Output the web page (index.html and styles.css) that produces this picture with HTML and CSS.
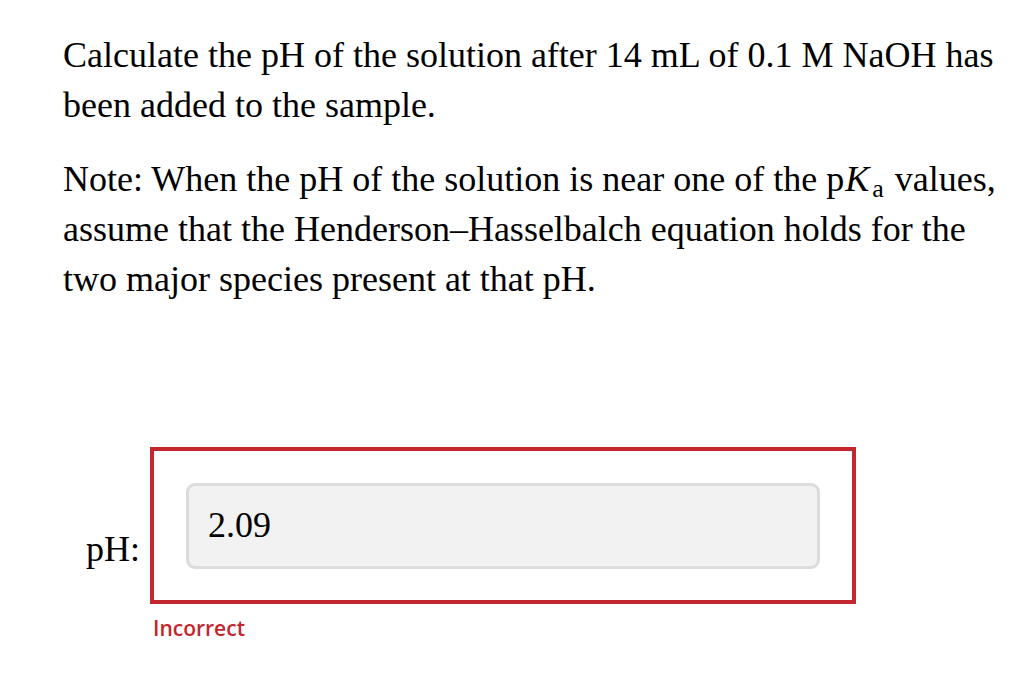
FILE: index.html
```html
<!DOCTYPE html>
<html>
<head>
<meta charset="utf-8">
<link rel="stylesheet" href="styles.css">
</head>
<body>
<div class="page">
  <p class="para">Calculate the pH of the solution after 14 mL of 0.1 M NaOH has been added to the sample.</p>
  <p class="para">Note: When the pH of the solution is near one of the p<i class="k">K</i><sub class="sub">a</sub> values, assume that the Henderson–Hasselbalch equation holds for the two major species present at that pH.</p>
  <div class="answer">
    <div class="label">pH:</div>
    <div class="field">
      <div class="box">
        <div class="input">2.09</div>
      </div>
      <div class="feedback">Incorrect</div>
    </div>
  </div>
</div>
</body>
</html>
```
FILE: styles.css
```css
html, body {
  margin: 0;
  padding: 0;
  background: #ffffff;
}
.page {
  padding: 30px 0 0 63px;
  width: 950px;
  font-family: "Liberation Serif", "Times New Roman", serif;
  color: #000000;
}
.para {
  margin: 0 0 24px 0;
  font-size: 36px;
  line-height: 50px;
}
.k {
  font-style: italic;
  margin-left: 1px;
}
.sub {
  font-size: 0.72em;
  vertical-align: -0.25em;
  line-height: 0;
  margin-left: 3px;
  margin-right: 2px;
}
.answer {
  display: flex;
  align-items: flex-start;
  margin-top: 143px;
}
.label {
  width: 87px;
  padding: 82px 0 0 23px;
  box-sizing: border-box;
  font-size: 36px;
  line-height: 40px;
}
.field {
  display: flex;
  flex-direction: column;
}
.box {
  width: 706px;
  height: 157px;
  box-sizing: border-box;
  border: 4px solid #c1272d;
  padding: 32px;
}
.input {
  height: 86px;
  box-sizing: border-box;
  background: #f2f2f2;
  border: 3px solid #dcdcdc;
  border-radius: 9px;
  padding: 19px 0 0 19px;
  font-size: 36px;
  line-height: 40px;
}
.feedback {
  margin: 11px 0 0 3px;
  font-family: "Open Sans", "Liberation Sans", sans-serif;
  font-weight: 600;
  font-size: 21px;
  line-height: 26px;
  color: #c1272d;
}
```
